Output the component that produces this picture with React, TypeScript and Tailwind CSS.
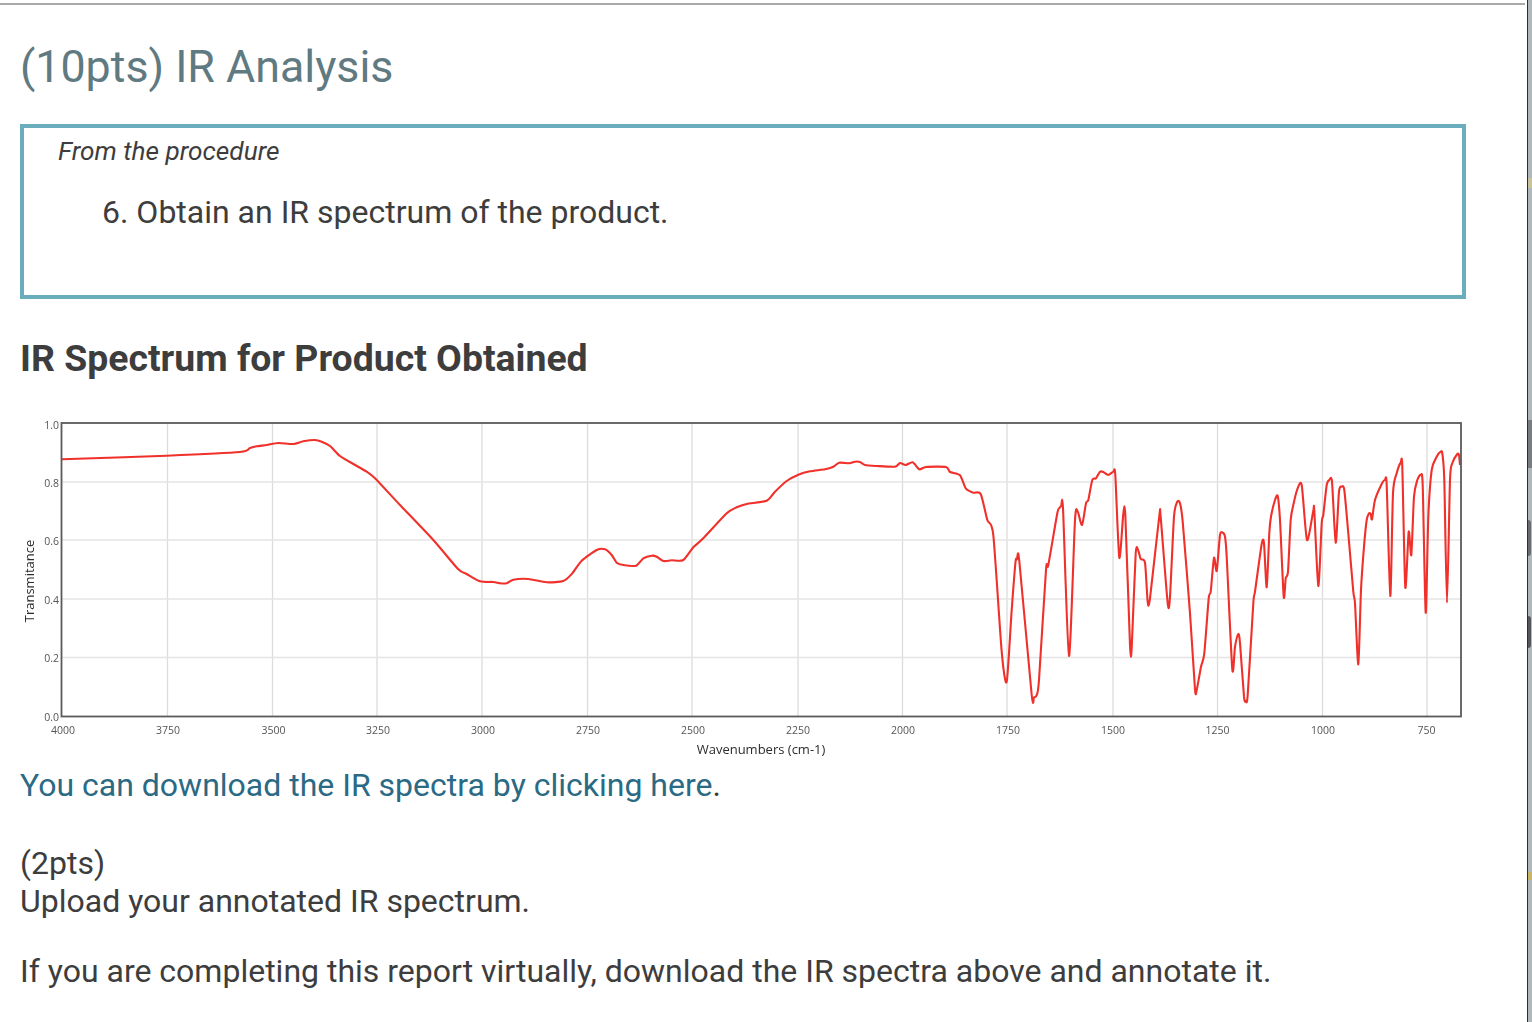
// IR analysis report section with a spectrum chart.

const curve: [number, number][] = [
  [62, 459.3], [166.7, 455.7], [240, 452], [250, 448], [256.7, 446.3], [266.7, 445], [278.3, 443], [293.3, 444],
  [303.3, 441.3], [315, 440], [321.7, 441.7], [330, 446], [340, 456], [353.3, 464], [366.7, 471.7], [375, 478.3],
  [400, 505], [433.3, 540], [458.3, 569.3], [466.7, 574], [480, 581.3], [493.3, 582], [500, 583.3], [506.7, 583.3],
  [513.3, 579.7], [528.3, 579], [546.7, 582.3], [563.3, 581], [571.7, 574], [581.7, 560.7], [596.7, 550], [605, 549.3],
  [611.7, 555], [616.7, 562.7], [623.3, 565], [636, 565.7], [643.3, 558.3], [651.7, 555.7], [656.7, 556.7], [663.3, 561],
  [671.7, 560.3], [683.3, 560], [693.3, 547.3], [703.3, 538.3], [726.7, 513.3], [736.7, 507.3], [746.7, 504], [766.7, 500.7],
  [775, 491.7], [786.7, 481], [798.3, 474.7], [810, 471.3], [825, 469.3], [833.3, 466.7], [839.3, 462.7], [849.3, 463.3],
  [855, 461.7], [860, 462], [865, 465], [876.7, 466], [895, 466.7], [900, 463], [905.7, 465], [912.7, 462.3],
  [919.3, 469.3], [926, 467], [946, 467], [950, 472], [960, 475.3], [965.7, 488.3], [973.3, 492.7], [980.7, 494],
  [987.3, 520], [993.3, 535], [1001.7, 651.7], [1006.7, 681.7], [1011.7, 610], [1015.5, 562], [1017, 559.5], [1019.3, 561], [1031.7, 695],
  [1034, 697.3], [1036.7, 695], [1039, 680], [1046, 570], [1048.3, 565], [1057.3, 513.3], [1059.5, 508], [1061.2, 506.3], [1063, 508],
  [1069, 656], [1075, 520], [1077.7, 511.7], [1082, 525], [1086, 503.3], [1088.3, 500], [1092.3, 480], [1096, 478.3],
  [1100, 471.7], [1103.3, 472], [1108.3, 475], [1113.3, 471.7], [1115.3, 475], [1119.3, 557.7], [1123.3, 514], [1125.3, 514.7],
  [1130, 645], [1131.7, 648], [1135.7, 553.3], [1138.3, 550.7], [1140.7, 559], [1145, 562.7], [1147.7, 602], [1150, 598.3],
  [1159.3, 516], [1160.7, 517.3], [1167.7, 603.3], [1170, 596.7], [1174, 516.7], [1177.3, 501.7], [1180, 503.3], [1182.7, 521.7],
  [1190, 613.3], [1195, 689.3], [1196.7, 690], [1201, 666.7], [1204.3, 653.3], [1208.7, 598.3], [1210.7, 591.7], [1214, 557.7],
  [1216.7, 571], [1220, 535], [1222.7, 532.7], [1225, 536.7], [1226.7, 556.7], [1232.3, 669.3], [1235, 646.7], [1238.3, 634],
  [1240, 643], [1244, 696.7], [1245.7, 701], [1247.7, 695], [1253.3, 603.3], [1255, 591.7], [1261.7, 544], [1264, 543.3],
  [1266.7, 587.3], [1269.3, 533.3], [1271, 516.7], [1275, 500], [1277.7, 496], [1280, 520], [1283.7, 596.7], [1285.7, 578.3],
  [1288, 571.7], [1290.7, 520], [1293.3, 505], [1297.3, 489.3], [1301.7, 485], [1307, 540], [1313.3, 510.7], [1314.3, 510.7],
  [1318.3, 586], [1321.7, 523.3], [1323.3, 515], [1326.7, 485], [1329.3, 480], [1332, 481.7], [1335.7, 542.7], [1339, 491.7],
  [1341.7, 486.7], [1344.3, 490], [1348.3, 533.3], [1353.3, 591.7], [1355, 603.3], [1358.3, 664.3], [1361, 590], [1364, 546.7],
  [1366.7, 520], [1369, 513.3], [1370.7, 514], [1372, 519.3], [1375, 500], [1381.7, 484], [1385, 480], [1386.7, 485],
  [1390.3, 596], [1393, 493.3], [1396.7, 473.3], [1400.7, 462.7], [1402.3, 466.7], [1405.3, 587.3], [1408.7, 531.7], [1411.3, 555],
  [1414, 496.7], [1417.3, 480], [1420.7, 475], [1422.7, 485], [1425.7, 612.7], [1428.3, 516.7], [1431.7, 470], [1436.7, 456.7],
  [1440.7, 451.7], [1442.3, 453.3], [1444.3, 480], [1447, 602.7], [1450, 480], [1452.3, 463.3], [1457.3, 454], [1459, 455],
  [1460, 465],
];

const verticals = [167.5, 272.5, 377, 482, 587.5, 692, 798, 902.5, 1007, 1113, 1217.5, 1322.5, 1427];
const horizontals = [482, 540, 599, 657.5];
const xTicks: [string, number][] = [
  ["4000", 63], ["3750", 168], ["3500", 273.5], ["3250", 378], ["3000", 483], ["2750", 588], ["2500", 693],
  ["2250", 798], ["2000", 903], ["1750", 1008], ["1500", 1113], ["1250", 1217.5], ["1000", 1323], ["750", 1426.5],
];
const yTicks: [string, number][] = [
  ["1.0", 429], ["0.8", 487], ["0.6", 545], ["0.4", 604], ["0.2", 662], ["0.0", 721],
];

// Catmull-Rom through the traced points, with a low tension so the sharp dips don't overshoot
function smoothPath(pts: [number, number][]) {
  let d = `M${pts[0][0]} ${pts[0][1]}`;
  for (let i = 0; i < pts.length - 1; i++) {
    const p0 = pts[Math.max(i - 1, 0)];
    const p1 = pts[i];
    const p2 = pts[i + 1];
    const p3 = pts[Math.min(i + 2, pts.length - 1)];
    const k = 0.12;
    d += `C${p1[0] + (p2[0] - p0[0]) * k} ${p1[1] + (p2[1] - p0[1]) * k} ${p2[0] - (p3[0] - p1[0]) * k} ${p2[1] - (p3[1] - p1[1]) * k} ${p2[0]} ${p2[1]}`;
  }
  return d;
}

function Spectrum() {
  return (
    <svg viewBox="20 415 1446 345" className="block w-[1446px] h-[345px] mt-[32px] blur-[0.6px]" style={{ fontFamily: '"Open Sans", sans-serif' }}>
      {verticals.map((x) => (
        <line key={x} x1={x} x2={x} y1={423} y2={716} stroke="#dcdcdc" strokeWidth="1.3" />
      ))}
      {horizontals.map((y) => (
        <line key={y} x1={62} x2={1461} y1={y} y2={y} stroke="#e4e4e4" strokeWidth="1.3" />
      ))}
      <path d={smoothPath(curve)} fill="none" stroke="#f0302a" strokeWidth="2.1" strokeLinejoin="round" />
      <rect x={61.5} y={423} width={1399.5} height={293.5} fill="none" stroke="#5a5a5a" strokeWidth="1.8" />
      {xTicks.map(([label, x]) => (
        <text key={label} x={x} y={734} textAnchor="middle" fontSize="10.5" fill="#555">{label}</text>
      ))}
      {yTicks.map(([label, y]) => (
        <text key={label} x={59} y={y} textAnchor="end" fontSize="10.5" fill="#555">{label}</text>
      ))}
      <text x={761} y={754} textAnchor="middle" fontSize="13" fill="#2c2c2c">Wavenumbers (cm-1)</text>
      <text x={34} y={581} textAnchor="middle" fontSize="13" fill="#2c2c2c" transform="rotate(-90 34 581)">Transmitance</text>
    </svg>
  );
}

export default function App() {
  return (
    <div className="flex h-[1022px] w-[1532px] overflow-hidden bg-white font-['Roboto',sans-serif] text-[#3d3d3d]">
      <main className="flex-1 min-w-0">
        <div className="mt-[3px] mr-[2px] h-[2px] bg-[#a9a9a9]" />
        <div className="w-[1466px] pl-[20px]">
          <h1 className="mt-[31px] text-[44.75px] leading-[62px] font-normal text-[#5f7a80]">(10pts) IR Analysis</h1>
          <section className="mt-[26px] h-[175px] border-4 border-[#6aaebd] pl-[34px]">
            <p className="mt-[5px] text-[26.2px] leading-[36px] italic">From the procedure</p>
            <ol className="mt-[23px] pl-[44px] text-[32px] leading-[40px]">
              <li>6. Obtain an IR spectrum of the product.</li>
            </ol>
          </section>
          <h2 className="mt-[34px] text-[37.4px] leading-[50px] font-bold">IR Spectrum for Product Obtained</h2>
          <Spectrum />
          <p className="mt-[6px] text-[32px] leading-[38px]">
            <a className="text-[#2a6a85]">You can download the IR spectra by clicking here</a>.
          </p>
          <p className="mt-[40px] text-[32px] leading-[38px]">
            (2pts)
            <br />
            Upload your annotated IR spectrum.
          </p>
          <p className="mt-[32px] text-[32px] leading-[38px]">
            If you are completing this report virtually, download the IR spectra above and annotate it.
          </p>
        </div>
      </main>
      <aside className="flex w-[5px] shrink-0 flex-col border-l border-[#2b2f33] bg-[#aeb8bd]">
        <div className="mt-[178px] h-[10px] w-full bg-[#c9c39b]" />
        <div className="mt-[232px] h-[48px] w-full bg-[#777d81]" />
        <div className="mt-[52px] h-[36px] w-[3px] rounded-r-full bg-[#6a6d6f]" />
        <div className="mt-[60px] h-[32px] w-[3px] rounded-r-full bg-[#55585a]" />
        <div className="mt-[224px] h-[8px] w-full bg-[#c9b46b]" />
      </aside>
    </div>
  );
}
